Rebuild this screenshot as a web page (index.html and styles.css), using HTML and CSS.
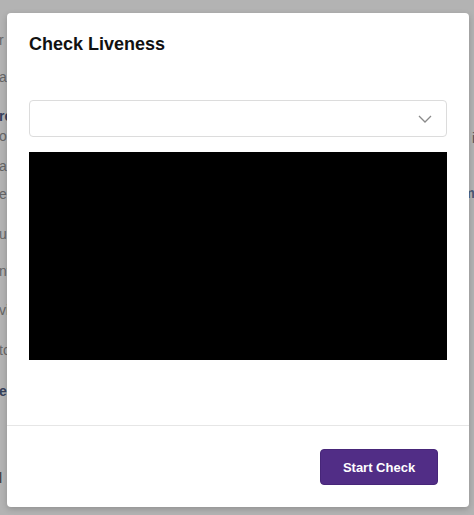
FILE: index.html
```html
<!DOCTYPE html>
<html>
<head>
<meta charset="utf-8">
<link rel="stylesheet" href="styles.css">
</head>
<body>
<div class="page">
  <div class="bg-col bg-left">
    <span class="ln l1">r</span>
    <span class="ln l2">a</span>
    <span class="ln l3 strong">re</span>
    <span class="ln l4">or</span>
    <span class="ln l5">a</span>
    <span class="ln l6">e</span>
    <span class="ln l7">u</span>
    <span class="ln l8">nt</span>
    <span class="ln l9">vi</span>
    <span class="ln l10">tc</span>
    <span class="ln l11 strong">e</span>
    <span class="ln l12 dark">l</span>
  </div>
  <div class="bg-col bg-right">
    <span class="ln r1">i</span>
    <span class="ln r2 strong">m</span>
  </div>
</div>
<div class="overlay">
  <div class="modal">
    <div class="modal-header">
      <h2 class="title">Check Liveness</h2>
    </div>
    <div class="modal-body">
      <div class="select">
        <svg class="chev" width="14" height="8" viewBox="0 0 14 8"><path d="M1 1 L7 7 L13 1" fill="none" stroke="#8a8a8a" stroke-width="1.3"/></svg>
      </div>
      <div class="video"></div>
    </div>
    <div class="modal-footer">
      <button class="btn">Start Check</button>
    </div>
  </div>
</div>
</body>
</html>
```
FILE: styles.css
```css
html, body {
  margin: 0;
  padding: 0;
}
body {
  width: 474px;
  height: 515px;
  overflow: hidden;
  background: #b3b3b3;
  font-family: "Liberation Sans", Arial, sans-serif;
  position: relative;
}
.page {
  display: flex;
  justify-content: space-between;
  height: 515px;
}
.bg-col {
  display: flex;
  flex-direction: column;
  font-size: 14px;
  line-height: 16px;
  color: #666;
}
.bg-left {
  margin-left: -1px;
  align-items: flex-start;
}
.bg-left .ln {
  white-space: nowrap;
}
.bg-right {
  margin-right: -1px;
  align-items: flex-end;
}
.strong { color: #36415a; font-weight: bold; }
.dark { color: #333; }
.l1 { margin-top: 32px; }
.l2 { margin-top: 21px; }
.l3 { margin-top: 23px; }
.l4 { margin-top: 4px; }
.l5 { margin-top: 14px; }
.l6 { margin-top: 12px; }
.l7 { margin-top: 24px; }
.l8 { margin-top: 21px; }
.l9 { margin-top: 23px; }
.l10 { margin-top: 24px; }
.l11 { margin-top: 25px; }
.l12 { margin-top: 71px; }
.r1 { margin-top: 130px; color: #555; }
.r2 { margin-top: 39px; color: #4a5a78; }

.overlay {
  position: absolute;
  left: 0;
  top: 0;
  width: 474px;
  height: 515px;
}
.modal {
  position: absolute;
  left: 7px;
  top: 13px;
  width: 462px;
  height: 494px;
  background: #fff;
  border-radius: 4px;
  box-shadow: 0 2px 6px rgba(0,0,0,0.2);
  display: flex;
  flex-direction: column;
  box-sizing: border-box;
}
.modal-header {
  padding: 20px 22px 0;
}
.title {
  margin: 0;
  font-size: 18px;
  line-height: 22px;
  font-weight: bold;
  color: #111;
}
.modal-body {
  padding: 45px 22px 0;
  display: flex;
  flex-direction: column;
  gap: 15px;
  flex: 1;
}
.select {
  height: 37px;
  box-sizing: border-box;
  border: 1px solid #dcdcdc;
  border-radius: 4px;
  display: flex;
  align-items: center;
  justify-content: flex-end;
  padding-right: 14px;
}
.chev { display: block; }
.video {
  height: 208px;
  background: #000;
}
.modal-footer {
  border-top: 1px solid #e6e6e6;
  padding: 23px 31px 22px;
  display: flex;
  justify-content: flex-end;
}
.btn {
  width: 118px;
  height: 36px;
  background: #512d86;
  color: #fff;
  border: 1px solid #472679;
  border-radius: 4px;
  font-family: "Liberation Sans", Arial, sans-serif;
  font-size: 13px;
  font-weight: bold;
  cursor: pointer;
}
```
